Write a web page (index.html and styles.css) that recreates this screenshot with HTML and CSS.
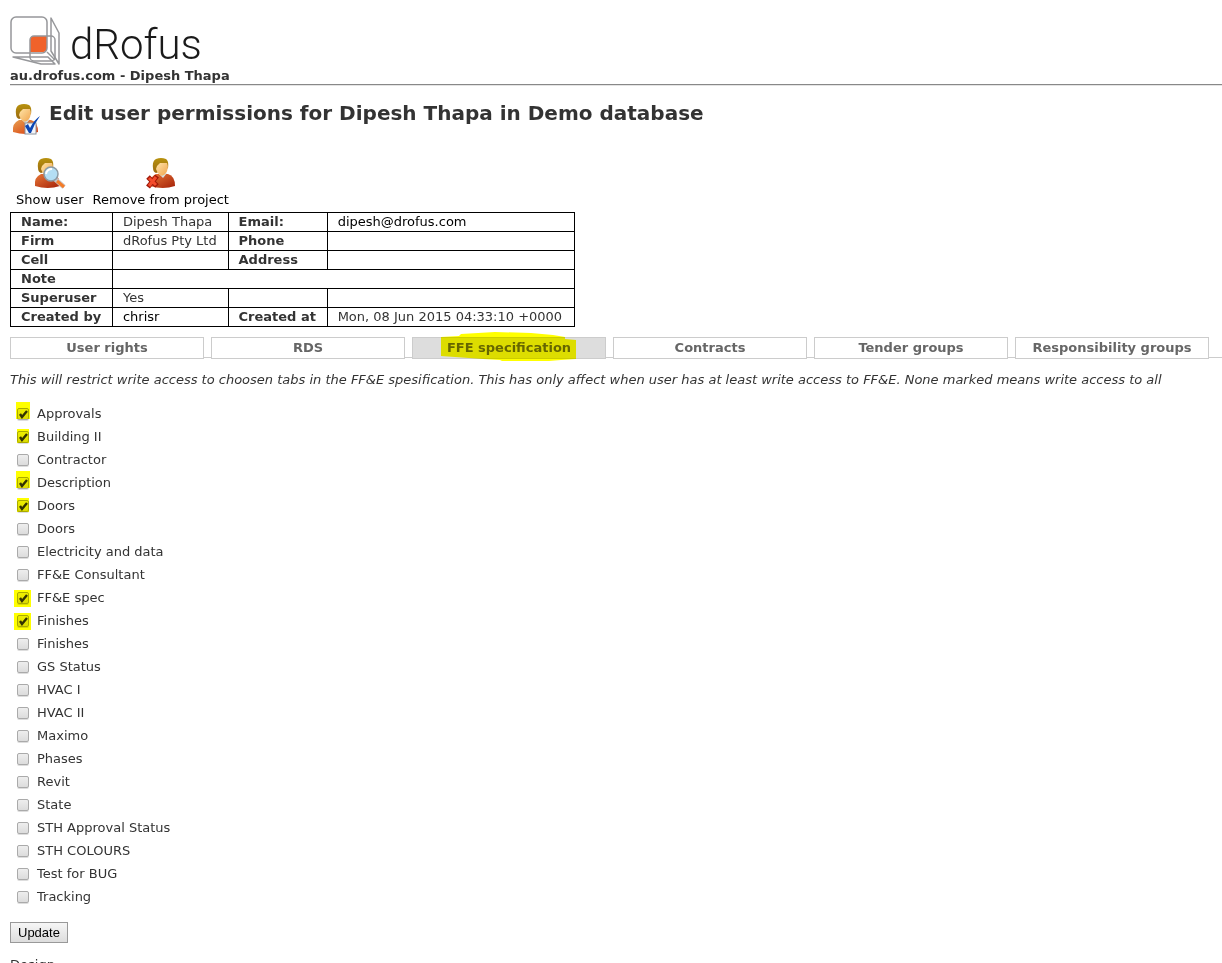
FILE: index.html
```html
<!DOCTYPE html>
<html lang="en">
<head>
    <meta charset="UTF-8">
    <meta name="viewport" content="width=device-width, initial-scale=1.0">
    <title>dRofus - Edit user permissions</title>
    <link rel="stylesheet" href="styles.css">
</head>
<body>
    <!-- Shared icon parts -->
    <svg class="defs" width="0" height="0" aria-hidden="true">
        <defs>
            <linearGradient id="hair" x1="0" y1="0" x2="0" y2="1">
                <stop offset="0" stop-color="#b8920e"/>
                <stop offset="1" stop-color="#9a6a10"/>
            </linearGradient>
            <linearGradient id="face" x1="0" y1="0" x2="1" y2="1">
                <stop offset="0" stop-color="#ffe4a8"/>
                <stop offset="1" stop-color="#f0a44c"/>
            </linearGradient>
            <linearGradient id="orange" x1="0" y1="0" x2="1" y2="1">
                <stop offset="0" stop-color="#e8a050"/>
                <stop offset="1" stop-color="#d8380c"/>
            </linearGradient>
            <linearGradient id="red" x1="0" y1="0" x2="1" y2="1">
                <stop offset="0" stop-color="#e87838"/>
                <stop offset="1" stop-color="#a42008"/>
            </linearGradient>
            <path id="body" d="M1 28Q0 19 7 16L19 16Q26 18 26 28Q14 32 1 28Z"/>
            <g id="head">
                <path d="M10 16L14 20L18 15Z" fill="#d4e0e4"/>
                <path d="M4 10Q3 3 7 1Q12 -1 17 1Q20 3 19 10L16 12L7 15Q4 14 4 10Z" fill="url(#hair)"/>
                <path d="M7 11Q8 7 11 5L18 5Q20 10 17 15Q14 19 11 17Q8 15 7 11Z" fill="url(#face)"/>
            </g>
        </defs>
    </svg>

    <header class="header">
        <div class="logo">
            <svg width="50" height="50" viewBox="0 0 50 50" aria-hidden="true">
                <path d="M20 24Q20 20 24 20H37V32Q37 36 33 36H20Z" fill="#f0622a"/>
                <g fill="none" stroke="#96979a" stroke-width="1.5" stroke-linejoin="round">
                    <rect x="1" y="1" width="36" height="36" rx="5"/>
                    <rect x="20" y="20" width="25" height="25" rx="4"/>
                    <path d="M41 2L49 17V48L41 35Z"/>
                    <path d="M3 41H38L45 48H31Z"/>
                    <path d="M37 36L45 44"/>
                </g>
            </svg>
            <span class="logo-text">dRofus</span>
        </div>
        <div class="site">au.drofus.com - Dipesh Thapa</div>
    </header>

    <main>
        <div class="title">
            <svg width="32" height="32" viewBox="0 0 32 32" aria-hidden="true">
                <use href="#body" fill="url(#orange)"/>
                <use href="#head"/>
                <rect x="13" y="19" width="11" height="11" fill="#f4f6fa" stroke="#8c929c"/>
                <path d="M13 22L16 20L18 24Q22 16 28 12Q22 20 19 29L17 29Z" fill="#0c46b4"/>
            </svg>
            <h1>Edit user permissions for Dipesh Thapa in Demo database</h1>
        </div>

        <nav class="actions">
            <a href="#">
                <svg width="32" height="32" viewBox="0 0 32 32" aria-hidden="true">
                    <use href="#body" fill="url(#red)"/>
                    <use href="#head"/>
                    <path d="M21 21L30 29" stroke="#c8c4c4" stroke-width="5"/>
                    <path d="M23 23L30 29" stroke="#f47c28" stroke-width="3"/>
                    <circle cx="17" cy="16" r="7" fill="#b4def4" stroke="#8c9aa4" stroke-width="1.5"/>
                    <path d="M12 16Q13 11 18 11" fill="none" stroke="#fff" stroke-width="2"/>
                </svg>
                Show user
            </a>
            <a href="#">
                <svg width="32" height="32" viewBox="0 0 32 32" aria-hidden="true">
                    <g transform="translate(4)">
                        <use href="#body" fill="url(#red)"/>
                        <use href="#head"/>
                    </g>
                    <path d="M3 19L12 28M12 18L3 29" stroke="#a01808" stroke-width="5"/>
                    <path d="M4 20L11 27M11 19L4 28" stroke="#f44c2c" stroke-width="3"/>
                </svg>
                Remove from project
            </a>
        </nav>

        <table class="info">
            <tr><th>Name:</th><td>Dipesh Thapa</td><th>Email:</th><td><a href="#">dipesh@drofus.com</a></td></tr>
            <tr><th>Firm</th><td>dRofus Pty Ltd</td><th>Phone</th><td></td></tr>
            <tr><th>Cell</th><td></td><th>Address</th><td></td></tr>
            <tr><th>Note</th><td colspan="3"></td></tr>
            <tr><th>Superuser</th><td>Yes</td><td></td><td></td></tr>
            <tr><th>Created by</th><td><a href="#">chrisr</a></td><th>Created at</th><td>Mon, 08 Jun 2015 04:33:10 +0000</td></tr>
        </table>

        <nav class="tabs">
            <a href="#">User rights</a>
            <a href="#">RDS</a>
            <a href="#" class="active">
                FFE specification
                <svg class="marker" width="136" height="30" viewBox="0 0 136 30" aria-hidden="true">
                    <path d="M0 5L18 4L20 2L54 0L90 1L112 3L124 5V7L135 8V27L120 28L108 29H61L59 28L42 27L0 24Z" fill="#ff0"/>
                </svg>
            </a>
            <a href="#">Contracts</a>
            <a href="#">Tender groups</a>
            <a href="#">Responsibility groups</a>
        </nav>

        <p class="note">This will restrict write access to choosen tabs in the FF&amp;E spesification. This has only affect when user has at least write access to FF&amp;E. None marked means write access to all</p>

        <form>
            <ul class="rights">
                <li><label class="marked tall"><input type="checkbox" checked>Approvals</label></li>
                <li><label class="marked"><input type="checkbox" checked>Building II</label></li>
                <li><label><input type="checkbox">Contractor</label></li>
                <li><label class="marked tall"><input type="checkbox" checked>Description</label></li>
                <li><label class="marked"><input type="checkbox" checked>Doors</label></li>
                <li><label><input type="checkbox">Doors</label></li>
                <li><label><input type="checkbox">Electricity and data</label></li>
                <li><label><input type="checkbox">FF&amp;E Consultant</label></li>
                <li><label class="marked wide"><input type="checkbox" checked>FF&amp;E spec</label></li>
                <li><label class="marked wide"><input type="checkbox" checked>Finishes</label></li>
                <li><label><input type="checkbox">Finishes</label></li>
                <li><label><input type="checkbox">GS Status</label></li>
                <li><label><input type="checkbox">HVAC I</label></li>
                <li><label><input type="checkbox">HVAC II</label></li>
                <li><label><input type="checkbox">Maximo</label></li>
                <li><label><input type="checkbox">Phases</label></li>
                <li><label><input type="checkbox">Revit</label></li>
                <li><label><input type="checkbox">State</label></li>
                <li><label><input type="checkbox">STH Approval Status</label></li>
                <li><label><input type="checkbox">STH COLOURS</label></li>
                <li><label><input type="checkbox">Test for BUG</label></li>
                <li><label><input type="checkbox">Tracking</label></li>
            </ul>
            <button type="submit" class="update-btn">Update</button>
        </form>
    </main>

    <footer class="footer">Design</footer>
</body>
</html>
```
FILE: styles.css
```css
* {
    box-sizing: border-box;
}

body {
    margin: 0;
    padding: 16px 0 0 10px;
    font-family: Verdana, "DejaVu Sans", sans-serif;
    font-size: 13px;
    line-height: 16px;
    color: #333;
    background: #fff;
}

a {
    color: #000;
    text-decoration: none;
}

.defs {
    display: block;
}

.header {
    border-bottom: 1px solid #888;
    box-shadow: 0 1px #e4e4e4;
}

.logo {
    display: flex;
    gap: 10px;
    height: 52px;
}

.logo-text {
    font-family: Roboto, sans-serif;
    font-size: 42px;
    font-weight: 300;
    line-height: 52px;
    padding-top: 3px;
    height: 52px;
    color: #1a1a1a;
}

.site {
    font-weight: bold;
}

.title {
    display: flex;
    gap: 5px;
    margin-top: 15px;
}

.title svg {
    margin: 4px 0 0 2px;
}

h1 {
    margin: 0;
    font-size: 20px;
    line-height: 26px;
}

.actions {
    display: flex;
    gap: 9px;
    margin: 22px 0 4px 6px;
}

.actions a {
    display: flex;
    flex-direction: column;
    align-items: center;
    gap: 2px;
}

.info {
    min-width: 565px;
    border-collapse: collapse;
}

.info th,
.info td {
    height: 19px;
    padding: 1px 10px;
    border: 1px solid #000;
    text-align: left;
}

.tabs {
    display: flex;
    gap: 7px;
    margin-top: 10px;
    padding-right: 13px;
    background: linear-gradient(#ccc, #ccc) 0 20px / 100% 1px no-repeat;
}

.tabs a {
    flex: 1;
    height: 22px;
    border: 1px solid #ccc;
    background: #fff;
    color: #666;
    font-weight: bold;
    line-height: 20px;
    text-align: center;
    white-space: nowrap;
}

.tabs a.active {
    position: relative;
    background: #ddd;
}

/* Highlighter over the current tab */
.marker {
    position: absolute;
    top: -6px;
    left: 50%;
    margin-left: -68px;
    mix-blend-mode: multiply;
}

.note {
    margin: 13px 0 14px;
    font-style: italic;
}

.rights {
    margin: 0;
    padding: 0 0 0 7px;
    list-style: none;
}

.rights label {
    position: relative;
    display: flex;
    align-items: center;
    gap: 8px;
    height: 23px;
}

.rights input {
    appearance: none;
    width: 12px;
    height: 12px;
    margin: 0;
    border: 1px solid #aaa;
    border-radius: 2px;
    background: linear-gradient(#eee, #dcdcdc);
    box-shadow: 0 1px #ddd;
}

.rights input:checked {
    background: url("data:image/svg+xml,%3Csvg xmlns='http://www.w3.org/2000/svg' viewBox='0 0 10 10'%3E%3Cpath d='M2 5L4 8L9 2' fill='none' stroke='%23333' stroke-width='2.4'/%3E%3C/svg%3E"), linear-gradient(#eee, #dcdcdc);
}

/* Highlighter over a granted right */
.marked::after {
    content: "";
    position: absolute;
    top: 4px;
    left: 0;
    width: 12px;
    height: 14px;
    background: #ff0;
    mix-blend-mode: multiply;
}

.marked.tall::after {
    top: 0;
    left: -1px;
    width: 14px;
    height: 17px;
}

.marked.wide::after {
    left: -3px;
    width: 17px;
    height: 17px;
}

.update-btn {
    display: block;
    height: 21px;
    margin: 14px 0;
    padding: 0 7px;
    border: 1px solid #999;
    background: linear-gradient(#f6f6f6, #ddd);
    color: #000;
    font-family: "Liberation Sans", Arial, sans-serif;
    font-size: 13px;
}
```
